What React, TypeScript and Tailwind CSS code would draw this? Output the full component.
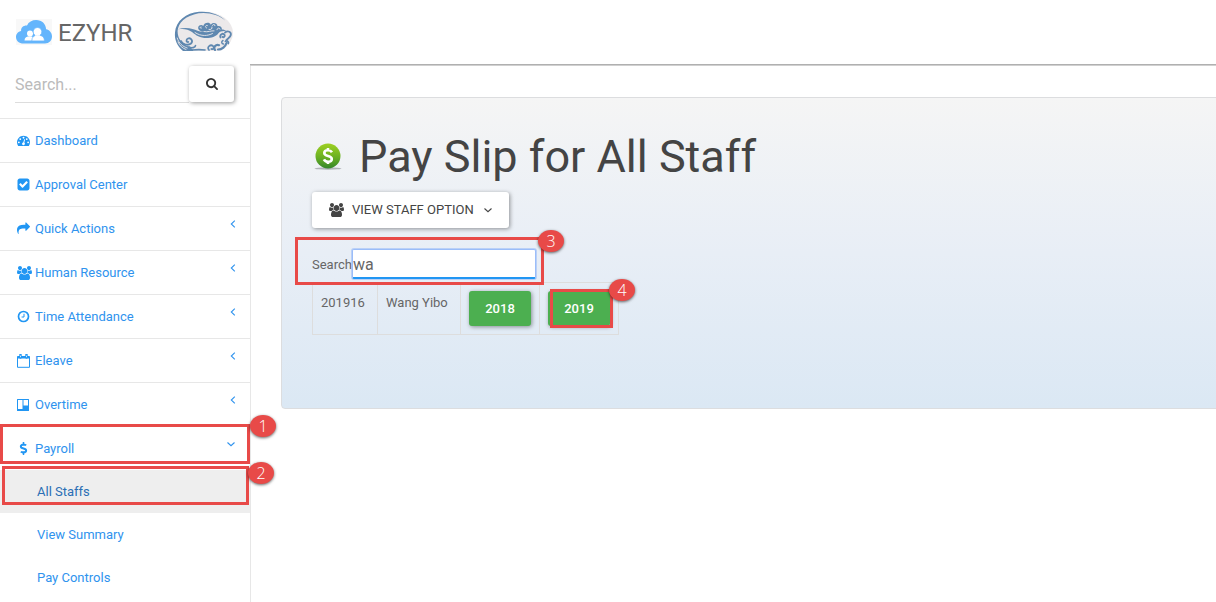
import type { ReactNode } from "react";
import { FaDollarSign } from "react-icons/fa";

type IconProps = { className?: string };

function UsersIcon({ className = "" }: IconProps) {
  return (
    <svg viewBox="0 0 1920 1792" className={className} fill="currentColor" aria-hidden="true">
      <path d="M593 896q-162 5-265 128h-134q-82 0-138-40.5t-56-118.5q0-353 124-353 6 0 43.5 21t97.5 42.5 119 21.5q67 0 133-23-5 37-5 66 0 139 81 256zm1071 637q0 120-73 189.5t-194 69.5h-874q-121 0-194-69.5t-73-189.5q0-53 3.5-103.5t14-109 26.5-108.5 43-97.5 62-81 85.5-53.5 111.5-20q10 0 43 21.5t73 48 107 48 135 21.5 135-21.5 107-48 73-48 43-21.5q61 0 111.5 20t85.5 53.5 62 81 43 97.5 26.5 108.5 14 109 3.5 103.5zm-1024-1277q0 106-75 181t-181 75-181-75-75-181 75-181 181-75 181 75 75 181zm704 384q0 159-112.5 271.5t-271.5 112.5-271.5-112.5-112.5-271.5 112.5-271.5 271.5-112.5 271.5 112.5 112.5 271.5zm576 225q0 78-56 118.5t-138 40.5h-134q-103-123-265-128 81-117 81-256 0-29-5-66 66 23 133 23 59 0 119-21.5t97.5-42.5 43.5-21q124 0 124 353zm-128-609q0 106-75 181t-181 75-181-75-75-181 75-181 181-75 181 75 75 181z" />
    </svg>
  );
}

function GaugeIcon() {
  return (
    <svg viewBox="0 0 1792 1792" className="size-[13px]" fill="currentColor" aria-hidden="true">
      <path d="M384 1152q0-53-37.5-90.5t-90.5-37.5-90.5 37.5-37.5 90.5 37.5 90.5 90.5 37.5 90.5-37.5 37.5-90.5zm192-448q0-53-37.5-90.5t-90.5-37.5-90.5 37.5-37.5 90.5 37.5 90.5 90.5 37.5 90.5-37.5 37.5-90.5zm428 481l101-382q6-26-7.5-48.5t-38.5-29.5-48 6.5-30 39.5l-101 382q-60 5-107 43.5t-63 98.5q-20 77 20 146t117 89 146-20 89-117q16-60-6-117t-72-91zm660-33q0-53-37.5-90.5t-90.5-37.5-90.5 37.5-37.5 90.5 37.5 90.5 90.5 37.5 90.5-37.5 37.5-90.5zm-640-640q0-53-37.5-90.5t-90.5-37.5-90.5 37.5-37.5 90.5 37.5 90.5 90.5 37.5 90.5-37.5 37.5-90.5zm448 192q0-53-37.5-90.5t-90.5-37.5-90.5 37.5-37.5 90.5 37.5 90.5 90.5 37.5 90.5-37.5 37.5-90.5zm320 448q0 261-141 483-19 29-54 29h-1402q-35 0-54-29-141-221-141-483 0-182 71-348t191-286 286-191 348-71 348 71 286 191 191 286 71 348z" />
    </svg>
  );
}

function CheckSquareIcon() {
  return (
    <svg viewBox="64 64 1664 1664" className="size-[13px]" fill="currentColor" aria-hidden="true">
      <path d="M813 1299l614-614q19-19 19-45t-19-45l-102-102q-19-19-45-19t-45 19l-467 467-211-211q-19-19-45-19t-45 19l-102 102q-19 19-19 45t19 45l358 358q19 19 45 19t45-19zm851-883v960q0 119-84.5 203.5t-203.5 84.5h-960q-119 0-203.5-84.5t-84.5-203.5v-960q0-119 84.5-203.5t203.5-84.5h960q119 0 203.5 84.5t84.5 203.5z" />
    </svg>
  );
}

function ShareIcon() {
  return (
    <svg viewBox="0 0 1792 1792" className="size-[13px]" fill="currentColor" aria-hidden="true">
      <path d="M1792 640q0 26-19 45l-512 512q-19 19-45 19t-45-19-19-45v-256h-224q-98 0-175.5 6t-154 21.5-133 42.5-105.5 69.5-80 101-48.5 138.5-17.5 181q0 55 5 123 0 6 2.5 23.5t2.5 26.5q0 15-8.5 25t-23.5 10q-16 0-28-17-7-9-13-22t-13.5-30-10.5-24q-127-285-127-451 0-199 53-333 162-403 875-403h224v-256q0-26 19-45t45-19 45 19l512 512q19 19 19 45z" />
    </svg>
  );
}

function SearchIcon() {
  return (
    <svg viewBox="64 128 1664 1664" className="size-3" fill="currentColor" aria-hidden="true">
      <path d="M1216 832q0-185-131.5-316.5t-316.5-131.5-316.5 131.5-131.5 316.5 131.5 316.5 316.5 131.5 316.5-131.5 131.5-316.5zm512 832q0 52-38 90t-90 38q-54 0-90-38l-343-342q-179 124-399 124-143 0-273.5-55.5t-225-150-150-225-55.5-273.5 55.5-273.5 150-225 225-150 273.5-55.5 273.5 55.5 225 150 150 225 55.5 273.5q0 220-124 399l343 343q37 37 37 90z" />
    </svg>
  );
}

function ClockIcon() {
  return (
    <svg viewBox="0 0 13 13" className="size-[13px]" fill="none" stroke="currentColor" aria-hidden="true">
      <circle cx="6.5" cy="6.5" r="5" strokeWidth="1.7" />
      <path d="M7 3.8v3.2H4.6" strokeWidth="1" />
    </svg>
  );
}

function CalendarIcon() {
  return (
    <svg viewBox="0 0 13 14" className="h-[14px] w-[13px]" fill="none" stroke="currentColor" aria-hidden="true">
      <path d="M.5 2.5h12v10.8H.5z" />
      <path d="M.5 3.5h12" strokeWidth="2" />
      <path d="M3.5.7v2.8M9.5.7v2.8" strokeWidth="2.4" strokeLinecap="round" />
      <path d="M3.5 1.6v1.6M9.5 1.6v1.6" stroke="#fff" strokeWidth=".8" />
    </svg>
  );
}

function BoardIcon() {
  return (
    <svg viewBox="0 0 12 12" className="size-3" aria-hidden="true">
      <path
        fill="currentColor"
        fillRule="evenodd"
        d="M.5 0h11q.5 0 .5.5v11q0 .5-.5.5H.5Q0 12 0 11.500V.5Q0 0 .5 0zM1 1v9h4.500V1zM6.500 1v5.500H11V1z"
      />
    </svg>
  );
}

function Angle({ open = false, className = "" }: { open?: boolean; className?: string }) {
  return (
    <svg
      viewBox="0 0 8 8"
      className={`size-2 ${className}`}
      fill="none"
      stroke="currentColor"
      strokeWidth="1.1"
      aria-hidden="true"
    >
      <path d={open ? "M.5 2.500 4 5.700 7.500 2.500" : "M5.800.7 2.300 4l3.500 3.300"} />
    </svg>
  );
}

function CloudLogo() {
  return (
    <svg viewBox="0 0 36 26" className="h-[26px] w-9 bg-[#f8f8f8]" aria-hidden="true">
      <path
        fill="#64b5fc"
        d="M7.500 24.500C3 24.500 0 21.800 0 18c0-3.200 2.200-5.600 5.100-6.100C4.800 8.400 7.400 6.200 11 6.400 12.700 3 16 1 20.200 1c5.600 0 9.600 3.700 9.900 9.300 3.300.6 5.900 3.500 5.900 7 0 4.200-2.900 7.200-7 7.200z"
      />
      <g fill="#fff">
        <circle cx="14" cy="14.500" r="3" />
        <path d="M8.500 21.500c.1-3 2-4.200 5.500-4.200 2.800 0 4 1.300 4 4.200z" />
      </g>
      <g fill="#fff" stroke="#64b5fc" strokeWidth=".7">
        <path d="M15.800 21.900c0-3.800 2-5.700 5.900-5.700 4.400 0 6.600 1.700 6.700 5.700z" />
        <circle cx="21.500" cy="12.800" r="4.300" />
      </g>
      <path d="M19 16.300h5v2h-5z" fill="#fff" />
    </svg>
  );
}

function WaveLogo() {
  return (
    <svg viewBox="0 0 60 40" className="h-10 w-[60px]" aria-hidden="true">
      <ellipse cx="30" cy="22" rx="29" ry="21.500" fill="#ece9ea" />
      <path
        fill="#5f88b0"
        d="M51.500 9.800C44 3 31 .3 20 3.400 8 6.800 2.500 15 3.800 23c1 6 5 10.500 11 12.500 2 1 4 2.500 4.500 4.500H9C3 35 .3 28.500 1 21.500 2 10 12 1.800 25 .8c11-.8 21 2.700 26.500 9z"
      />
      <path
        fill="#5f88b0"
        d="M4 18.300c5-1.700 10-1.600 14.500-.3 4 1.200 8 3.400 11.500 2.600-4-.2-6.500-2.400-5.700-4.700.7-2.100 3.800-2.600 4.900-.8.900-3.900 6.400-4.500 7.600-1.400 1-2.500 6.500-2.500 6.700 1.300 3-.5 4.800 1.500 4.300 3.500 2 0 3.500.5 4.700 1.700-3.500-.5-6.500.1-8.300 2.300-2.400 3.300-6.700 4.500-11.700 4.500-6.500 0-10.500-2.800-14.500-6.100-4-2.800-8.500-3.600-14-2.600z"
      />
      <g fill="none" stroke="#ece9ea" strokeLinecap="round" strokeWidth=".9">
        <path d="M27.300 17.200c-1.500.3-1.600-1.300-.3-1.300M32.500 17c-2-1-.8-3.300.9-2.500M38.500 14.500c.2-1.700 2.700-1.500 2.500.2M35 18.500c2 .5 3.500-.8 3-2.500M43 18.700c.2-2 2.700-2.200 3-.6M30 20.600c4 .8 7-1.100 10-.8M21 21.500c6 4.200 13 3.500 17.500 1" />
        <path d="M3.200 27c1.500 5.500 5.500 8.500 10 10M4 31c2 4 4 6 8 7.500" />
      </g>
      <g fill="none" stroke="#5f88b0" strokeLinecap="round">
        <path d="M7 30c1.500 3.500 7 5 10 2.500 2.500-2.500 0-6-3-5-2.300 1-1.700 4 .3 3.500" strokeWidth="1.800" />
        <path d="M15 36c2.500 1.500 6.500.5 6.500-1.500M18 39c5-.5 9-.5 13 0M35 39c-2.500-3 1.500-6 4-4 1.700 1.700 0 3.800-1.700 3" strokeWidth="1.700" />
        <path d="M41 39c-2-3 1-6 4-4.800M44 38.500c4 0 7.500-3 8.500-6.500" strokeWidth="2.200" />
        <path d="M46.500 26.500c-1.200-3 2.500-5 4-2.700 1 1.700-1 3-2 2M51 21.500c3-2.500 6.500-.5 5.800 2.500-.5 3-4 3.500-5 6 2-.2 3 .8 2.500 2.500" strokeWidth="1.800" />
        <path d="M49 29.500c-2 1-1.500 3.500.5 3.500" strokeWidth="1.400" />
      </g>
    </svg>
  );
}

function CoinIcon() {
  return (
    <svg viewBox="0 0 28 28" className="size-7" aria-hidden="true">
      <defs>
        <linearGradient id="coin" x1="0" y1="0" x2="0" y2="1">
          <stop offset="0" stopColor="#9ed021" />
          <stop offset=".55" stopColor="#6ab023" />
          <stop offset="1" stopColor="#35862b" />
        </linearGradient>
      </defs>
      <ellipse cx="14" cy="26.500" rx="13.500" ry="1.200" fill="#8d9196" opacity=".65" />
      <circle cx="14" cy="14" r="12.500" fill="url(#coin)" />
      <path
        d="M18 10.300C17 8.700 15.600 8.300 14 8.300c-2.200 0-3.700 1-3.700 2.700 0 4 7.500 2 7.500 6 0 1.900-1.600 2.800-3.700 2.800-2 0-3.400-.8-4.200-2.400M14 6v2.300M14 19.800v2.300"
        fill="none"
        stroke="#fff"
        strokeWidth="2.600"
      />
    </svg>
  );
}

function Badge({ children, className }: { children: ReactNode; className: string }) {
  return (
    <span
      className={`absolute z-20 flex h-[22px] w-[26px] items-center justify-center rounded-[50%] bg-[#e84a48] font-['Open_Sans',sans-serif] text-base leading-none font-light text-white shadow-[0_1px_3px_rgba(0,0,0,0.6)] ${className}`}
    >
      {children}
    </span>
  );
}

function Frame({ className }: { className: string }) {
  return <span aria-hidden="true" className={`pointer-events-none absolute z-10 border-3 border-[#e84a48] ${className}`} />;
}

const menu = [
  { label: "Dashboard", icon: <GaugeIcon />, expandable: false },
  { label: "Approval Center", icon: <CheckSquareIcon />, expandable: false },
  { label: "Quick Actions", icon: <ShareIcon />, expandable: true },
  { label: "Human Resource", icon: <UsersIcon className="h-[14px] w-[15px] shrink-0" />, expandable: true },
  { label: "Time Attendance", icon: <ClockIcon />, expandable: true },
  { label: "Eleave", icon: <CalendarIcon />, expandable: true },
  { label: "Overtime", icon: <BoardIcon />, expandable: true },
];

function Sidebar() {
  return (
    <aside className="w-[251px] shrink-0 border-r border-[#e7e7e7]">
      <form className="flex pt-[2px] pr-4 pl-[15px]" onSubmit={(e) => e.preventDefault()}>
        <input
          type="text"
          aria-label="Search menu"
          placeholder="Search..."
          className="h-[37px] min-w-0 flex-1 border-b border-[#dddddd] text-base text-[#666666] outline-none placeholder:text-[#bbbbbb]"
        />
        <button
          type="submit"
          aria-label="Search"
          className="flex h-9 w-[45px] items-center justify-center rounded-[3px] bg-white text-[#333333] shadow-[1px_1px_4px_rgba(0,0,0,0.4)]"
        >
          <SearchIcon />
        </button>
      </form>
      <nav className="mt-[15px] border-t border-[#e7e7e7] text-[13px] text-[#2f93ee]">
        <ul>
          {menu.map((item) => (
            <li key={item.label} className="border-b border-[#e7e7e7]">
              <a href="#" className="flex h-[43px] items-center pr-[13px] pl-4">
                <span className="flex w-[19px] pl-px text-[#2196f3]">{item.icon}</span>
                <span className="flex-1">{item.label}</span>
                {item.expandable && <Angle className="mb-[10px]" />}
              </a>
            </li>
          ))}
          <li>
            <a href="#" className="relative flex h-[43px] items-center pr-[15px] pl-4">
              <span className="flex w-[19px] pl-px text-[#2196f3]">
                <FaDollarSign className="size-[13px]" />
              </span>
              <span className="flex-1">Payroll</span>
              <Angle open className="mb-[10px]" />
              <Frame className="inset-x-0 -top-[3px] bottom-[6px]" />
              <Badge className="-top-3 -right-[26px]">1</Badge>
            </a>
            <ul>
              <li>
                <a href="#" className="relative flex h-[43px] items-center bg-[#eeeeee] pl-[37px] text-[#2a6fb5]">
                  All Staffs
                  <Frame className="right-px -top-[4px] bottom-2 left-[2px]" />
                  <Badge className="-top-2 -right-6">2</Badge>
                </a>
              </li>
              <li>
                <a href="#" className="flex h-[43px] items-center pl-[37px]">View Summary</a>
              </li>
              <li>
                <a href="#" className="flex h-[43px] items-center pl-[37px]">Pay Controls</a>
              </li>
            </ul>
          </li>
        </ul>
      </nav>
    </aside>
  );
}

const yearButton =
  "h-[35px] w-[62px] rounded-[3px] bg-[#4caf50] text-[13px] font-medium text-white shadow-[1px_1px_4px_rgba(0,0,0,0.4)]";

function PaySlipPanel() {
  return (
    <section className="-mr-2 h-[312px] rounded border border-[#dcdddf] bg-linear-to-b from-[#f5f5f5] via-[#e8eef6] to-[#dbe8f4] px-[30px] pt-[26px]">
      <h1 className="flex h-16 items-center pl-[2px] text-[45px] leading-none text-[#444444]">
        <span className="mr-[17px]">
          <CoinIcon />
        </span>
        Pay Slip for All Staff
      </h1>
      <button
        type="button"
        className="mt-1 flex h-9 items-center rounded-[3px] bg-white px-[17px] text-[13px] text-[#444444] shadow-[1px_1px_4px_rgba(0,0,0,0.4)]"
      >
        <UsersIcon className="mr-2 h-[14px] w-[15px]" />
        VIEW STAFF OPTION
        <Angle open className="ml-[10px]" />
      </button>
      <div className="relative mt-[21px] flex w-[224px] items-center">
        <label htmlFor="staff-search" className="w-10 shrink-0 pt-[2px] text-[13px] text-[#666666]">
          Search
        </label>
        <input
          id="staff-search"
          type="text"
          defaultValue="wa"
          className="h-[30px] min-w-0 flex-1 rounded-xs border border-b-2 border-[#9bbdf9] border-b-[#2196f3] bg-white pt-px text-base text-[#666666] ring-1 ring-[#9bbdf9]/60 outline-none"
        />
        <Frame className="-top-3 -right-2 -bottom-[6px] -left-[17px]" />
        <Badge className="-top-[19px] -right-7">3</Badge>
      </div>
      <table className="mt-[3px] border-collapse text-[13px] text-[#666666]">
        <tbody>
          <tr className="align-top">
            <td className="w-[65px] border border-[#dddddd] px-2 pt-[10px] pb-2">201916</td>
            <td className="w-[83px] border border-[#dddddd] px-2 pt-[10px] pb-2">Wang Yibo</td>
            <td className="border border-[#dddddd] p-2">
              <button type="button" className={yearButton}>2018</button>
            </td>
            <td className="border border-[#dddddd] p-2">
              <div className="relative">
                <button type="button" className={yearButton}>2019</button>
                <Frame className="-top-[2px] -right-[3px] -bottom-[2px] left-[2px]" />
                <Badge className="-top-3 -right-[25px]">4</Badge>
              </div>
            </td>
          </tr>
        </tbody>
      </table>
    </section>
  );
}

export default function App() {
  return (
    <div className="flex min-h-screen flex-col overflow-x-hidden bg-white font-[Roboto,sans-serif] text-[#666666]">
      <header className="flex h-16 items-start pl-4">
        <a href="#" className="flex h-16 w-[158px] items-center text-[24px]">
          <CloudLogo />
          <span className="ml-[6px] pt-[2px]">EZYHR</span>
        </a>
        <span className="pt-[11px]">
          <WaveLogo />
        </span>
      </header>
      <div className="flex flex-1">
        <Sidebar />
        <main className="-ml-px min-w-0 flex-1">
          <div className="h-[2px] border-b border-[#d0d0d0] bg-[#b0b0b0]" />
          <div className="pt-[31px] pl-[31px]">
            <PaySlipPanel />
          </div>
        </main>
      </div>
    </div>
  );
}
